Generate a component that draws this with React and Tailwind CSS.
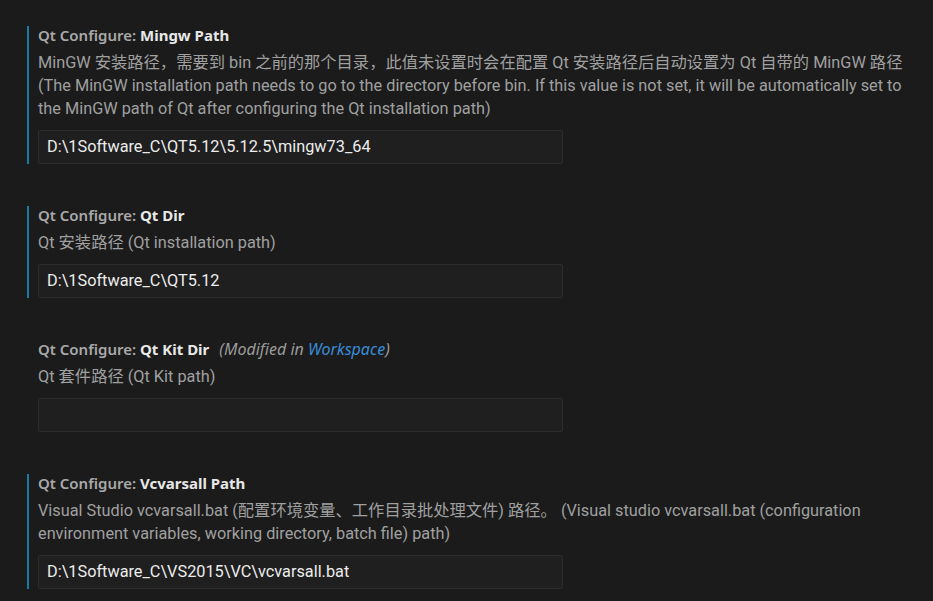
import React from "react";

const titleFont = { fontFamily: '"Noto Sans", "Noto Sans CJK SC", sans-serif' };
const bodyFont = { fontFamily: 'Roboto, "Noto Sans CJK SC", sans-serif' };

const Setting = ({ name, note, desc, value, focused }) => {
    return (
        <div className={"flex flex-col pl-[9px] border-l-2 " + (focused ? "border-[#1a7ba1]" : "border-transparent")}>
            <div className="h-[18px] flex items-center text-[15px] leading-[18px] whitespace-nowrap" style={titleFont}>
                <span className="font-semibold text-[#a9a9a9]">Qt Configure:&nbsp;</span>
                <span className="font-bold text-[#e8e8e8]">{name}</span>
                {note && (
                    <span className="ml-[10px] italic text-[16px] text-[#9a9a9a]">
                        (Modified in <span className="text-[#3a8bd8]">Workspace</span>)
                    </span>
                )}
            </div>
            <p className="mt-[7px] w-[880px] text-[16.3px] leading-[23px] text-[#a0a0a0]" style={bodyFont}>{desc}</p>
            <div className="mt-[10px] w-[525px] h-[34px] flex items-center px-[8px] bg-[#1f1f1f] border border-[#2c2c2c] rounded-[2px] text-[16.3px] text-[#ececec]" style={bodyFont}>
                {value}
            </div>
        </div>
    );
};

export default function App() {
    return (
        <div className="w-[933px] h-[601px] overflow-hidden bg-[#1b1b1b] pt-[26px] pl-[27px]">
            <div className="flex flex-col gap-[42px]">
                <Setting
                    focused
                    name="Mingw Path"
                    desc="MinGW 安装路径，需要到 bin 之前的那个目录，此值未设置时会在配置 Qt 安装路径后自动设置为 Qt 自带的 MinGW 路径 (The MinGW installation path needs to go to the directory before bin. If this value is not set, it will be automatically set to the MinGW path of Qt after configuring the Qt installation path)"
                    value="D:\1Software_C\QT5.12\5.12.5\mingw73_64"
                />
                <Setting
                    focused
                    name="Qt Dir"
                    desc="Qt 安装路径 (Qt installation path)"
                    value="D:\1Software_C\QT5.12"
                />
                <Setting
                    name="Qt Kit Dir"
                    note
                    desc="Qt 套件路径 (Qt Kit path)"
                    value=""
                />
                <Setting
                    focused
                    name="Vcvarsall Path"
                    desc="Visual Studio vcvarsall.bat (配置环境变量、工作目录批处理文件) 路径。 (Visual studio vcvarsall.bat (configuration environment variables, working directory, batch file) path)"
                    value="D:\1Software_C\VS2015\VC\vcvarsall.bat"
                />
            </div>
        </div>
    );
}
